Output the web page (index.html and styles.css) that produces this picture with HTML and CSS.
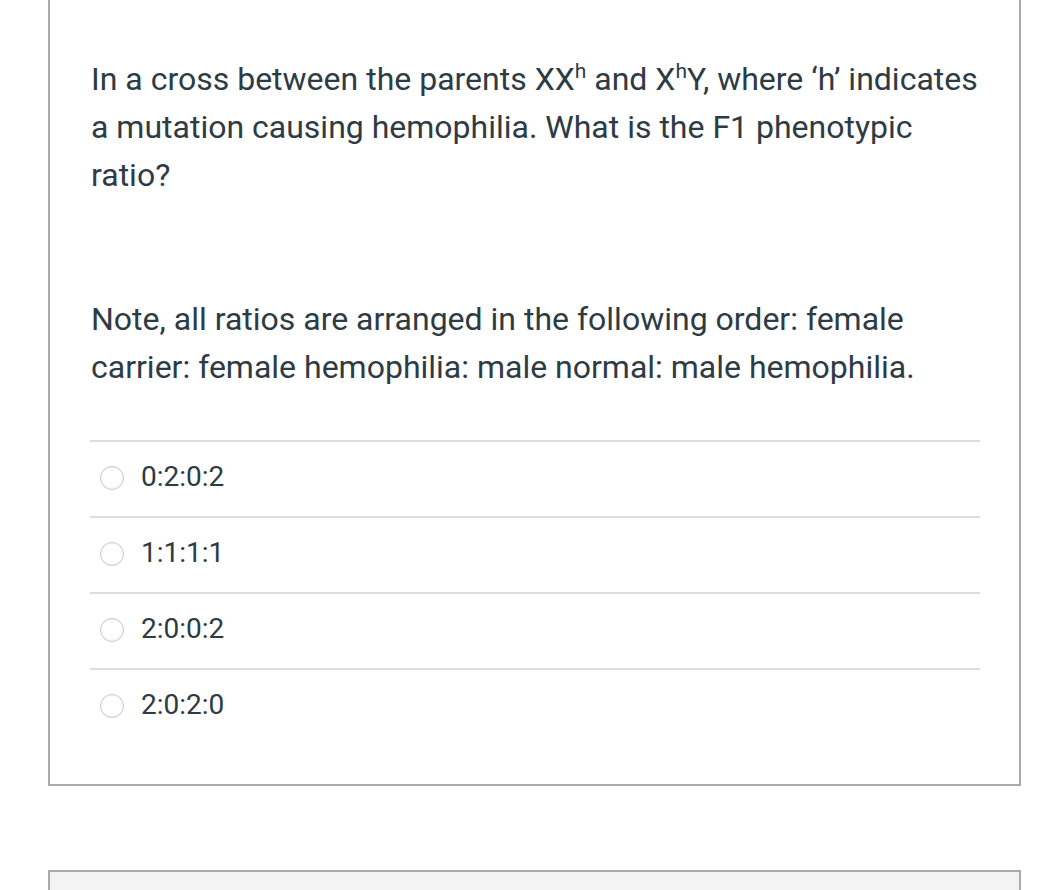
FILE: index.html
```html
<!DOCTYPE html>
<html>
<head>
<meta charset="utf-8">
<link rel="stylesheet" href="styles.css">
</head>
<body>
<div class="page">
  <div class="card">
    <div class="question">
      <p class="para">In a cross between the parents XX<sup>h</sup> and X<sup>h</sup>Y, where ‘h’ indicates a mutation causing hemophilia. What is the F1 phenotypic ratio?</p>
      <p class="para gap">Note, all ratios are arranged in the following order: female carrier: female hemophilia: male normal: male hemophilia.</p>
    </div>
    <ul class="options">
      <li class="option"><span class="radio"></span><span class="label">0:2:0:2</span></li>
      <li class="option"><span class="radio"></span><span class="label">1:1:1:1</span></li>
      <li class="option"><span class="radio"></span><span class="label">2:0:0:2</span></li>
      <li class="option"><span class="radio"></span><span class="label">2:0:2:0</span></li>
    </ul>
  </div>
  <div class="card next"></div>
</div>
</body>
</html>
```
FILE: styles.css
```css
html, body {
  margin: 0;
  padding: 0;
  background: #fff;
}
body {
  font-family: Roboto, "Liberation Sans", Arial, sans-serif;
  color: #2d3b45;
  overflow: hidden;
  height: 890px;
}
.page {
  padding-left: 48px;
  width: 973px;
  margin-top: -2px;
}
.card {
  border: 2px solid #aaaaaa;
  background: #fff;
  padding: 55px 39px 40px 41px;
}
.card.next {
  margin-top: 84px;
  background: #f3f3f3;
  height: 60px;
  padding: 0;
}
.para {
  margin: 0;
  font-size: 32px;
  line-height: 48px;
}
.para.gap {
  margin-top: 96px;
}
.para sup {
  font-size: 21px;
  line-height: 0;
  vertical-align: 12px;
}
.options {
  list-style: none;
  margin: 49px 0 0 -1px;
  padding: 0;
}
.option {
  border-top: 2px solid #dddddd;
  height: 74px;
  display: flex;
  align-items: center;
  gap: 17px;
  padding-left: 10px;
}
.radio {
  width: 22px;
  height: 22px;
  border-radius: 50%;
  border: 1px solid #c8c8c8;
  background: radial-gradient(circle at 50% 40%, #ffffff 55%, #f0f0f0 100%);
  box-shadow: inset 0 1px 1px rgba(0,0,0,0.05);
  flex: none;
  margin-top: -2px;
}
.label {
  font-size: 28px;
  line-height: 30px;
  margin-top: -4px;
}
```
